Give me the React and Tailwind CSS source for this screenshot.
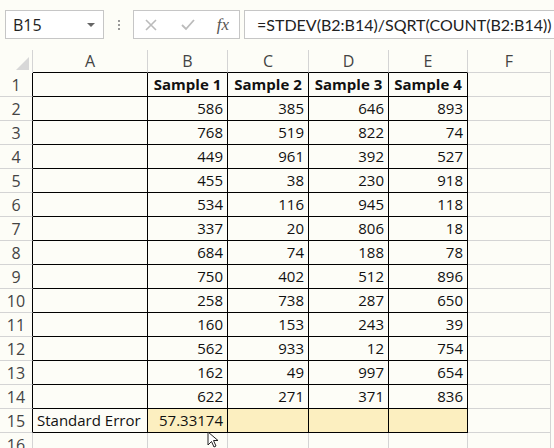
import React from "react";

const rows = [
  [586, 385, 646, 893],
  [768, 519, 822, 74],
  [449, 961, 392, 527],
  [455, 38, 230, 918],
  [534, 116, 945, 118],
  [337, 20, 806, 18],
  [684, 74, 188, 78],
  [750, 402, 512, 896],
  [258, 738, 287, 650],
  [160, 153, 243, 39],
  [562, 933, 12, 754],
  [162, 49, 997, 654],
  [622, 271, 371, 836],
];

const widths = ["w-[115px]", "w-[80px]", "w-[81px]", "w-[80px]", "w-[79px]"];

function RowNum({ n, inTable }) {
  return (
    <div
      className={`w-[33px] shrink-0 h-[24px] flex items-center justify-center text-[16px] text-[#444] border-r border-b ${
        inTable ? "border-r-black border-b-[#d4d4d4]" : "border-[#d4d4d4]"
      }`}
    >
      {n}
    </div>
  );
}

function Cell({ w, children, align = "right", bold, fill }) {
  return (
    <div
      className={`${w} shrink-0 h-[24px] flex items-center px-[4px] border-r border-b border-black whitespace-nowrap ${
        align === "right" ? "justify-end" : align === "center" ? "justify-center" : "justify-start"
      } ${bold ? "font-bold" : ""} ${fill ? "bg-[#fcefc0]" : ""}`}
    >
      {children}
    </div>
  );
}

function Spare() {
  return <div className="w-[83px] shrink-0 h-[24px] border-r border-b border-[#d4d4d4]" />;
}

export default function App() {
  return (
    <div
      className="w-[554px] h-[448px] overflow-hidden bg-[#fdfdf7] text-[15px] text-[#111]"
      style={{ fontFamily: "'Open Sans', 'Noto Sans', sans-serif" }}
    >
      {/* formula bar */}
      <div className="h-[50px] flex items-start pt-[10px] pl-[5px]">
        <div className="w-[102px] h-[29px] border border-[#c6c6c6] bg-white flex items-center justify-between pl-[7px] pr-[8px]">
          <span className="text-[16px] text-[#222]">B15</span>
          <span className="w-0 h-0 border-l-[4px] border-r-[4px] border-t-[4px] border-l-transparent border-r-transparent border-t-[#666]" />
        </div>
        <div className="w-[31px] h-[29px] flex flex-col items-center justify-center gap-[2px]">
          <span className="w-[2px] h-[2px] bg-[#999]" />
          <span className="w-[2px] h-[2px] bg-[#999]" />
          <span className="w-[2px] h-[2px] bg-[#999]" />
        </div>
        <div className="w-[110px] h-[29px] border border-[#c6c6c6] bg-white flex items-center justify-between pl-[10px] pr-[10px]">
          <svg width="14" height="14" viewBox="0 0 14 14">
            <path d="M2 2 L12 12 M12 2 L2 12" stroke="#bbb" strokeWidth="1.6" fill="none" />
          </svg>
          <svg width="16" height="14" viewBox="0 0 16 14">
            <path d="M2 7 L6 11 L14 2" stroke="#bbb" strokeWidth="1.8" fill="none" />
          </svg>
          <span
            className="text-[17px] italic text-[#555]"
            style={{ fontFamily: "'Liberation Serif', serif" }}
          >
            fx
          </span>
        </div>
        <div
          className="w-[310px] shrink-0 h-[29px] ml-[4px] border border-[#c6c6c6] border-r-0 bg-white flex items-center pl-[12px] text-[16px] text-[#222] whitespace-nowrap"
          style={{ fontFamily: "Lato, sans-serif" }}
        >
          =STDEV(B2:B14)/SQRT(COUNT(B2:B14))
        </div>
      </div>

      {/* column headers */}
      <div className="flex h-[23px] text-[16px] text-[#444]">
        <div className="w-[33px] shrink-0 border-r border-[#d4d4d4] relative">
          <svg className="absolute right-[3px] bottom-[3px]" width="13" height="13" viewBox="0 0 13 13">
            <path d="M13 0 L13 13 L0 13 Z" fill="#d8d8d8" />
          </svg>
        </div>
        {["A", "B", "C", "D", "E"].map((c, i) => (
          <div
            key={c}
            className={`${widths[i]} shrink-0 flex items-center justify-center border-r border-b border-r-[#d4d4d4] border-b-black`}
          >
            {c}
          </div>
        ))}
        <div className="w-[83px] shrink-0 flex items-center justify-center border-r border-b border-[#d4d4d4]">F</div>
      </div>

      {/* row 1 */}
      <div className="flex">
        <RowNum n={1} inTable />
        <Cell w={widths[0]} />
        {["Sample 1", "Sample 2", "Sample 3", "Sample 4"].map((s, i) => (
          <Cell key={s} w={widths[i + 1]} align="center" bold>
            {s}
          </Cell>
        ))}
        <Spare />
      </div>

      {rows.map((r, idx) => (
        <div key={idx} className="flex">
          <RowNum n={idx + 2} inTable />
          <Cell w={widths[0]} />
          {r.map((v, i) => (
            <Cell key={i} w={widths[i + 1]}>
              {v}
            </Cell>
          ))}
          <Spare />
        </div>
      ))}

      {/* row 15 */}
      <div className="flex relative">
        <RowNum n={15} inTable />
        <Cell w={widths[0]} align="left">
          Standard Error
        </Cell>
        <Cell w={widths[1]} fill>
          57.33174
        </Cell>
        <Cell w={widths[2]} fill />
        <Cell w={widths[3]} fill />
        <Cell w={widths[4]} fill />
        <Spare />
      </div>

      {/* row 16 */}
      <div className="flex relative">
        <RowNum n={16} />
        {widths.map((w, i) => (
          <div key={i} className={`${w} shrink-0 h-[24px] border-r border-b border-[#d4d4d4]`} />
        ))}
        <Spare />
        <svg className="absolute left-[207px] top-[-2px]" width="14" height="18" viewBox="0 0 14 18">
          <path d="M1 1 L1 14 L4.5 10.5 L7 16 L9 15 L6.5 9.5 L11 9.5 Z" fill="#fff" stroke="#222" strokeWidth="1" />
        </svg>
      </div>
    </div>
  );
}
